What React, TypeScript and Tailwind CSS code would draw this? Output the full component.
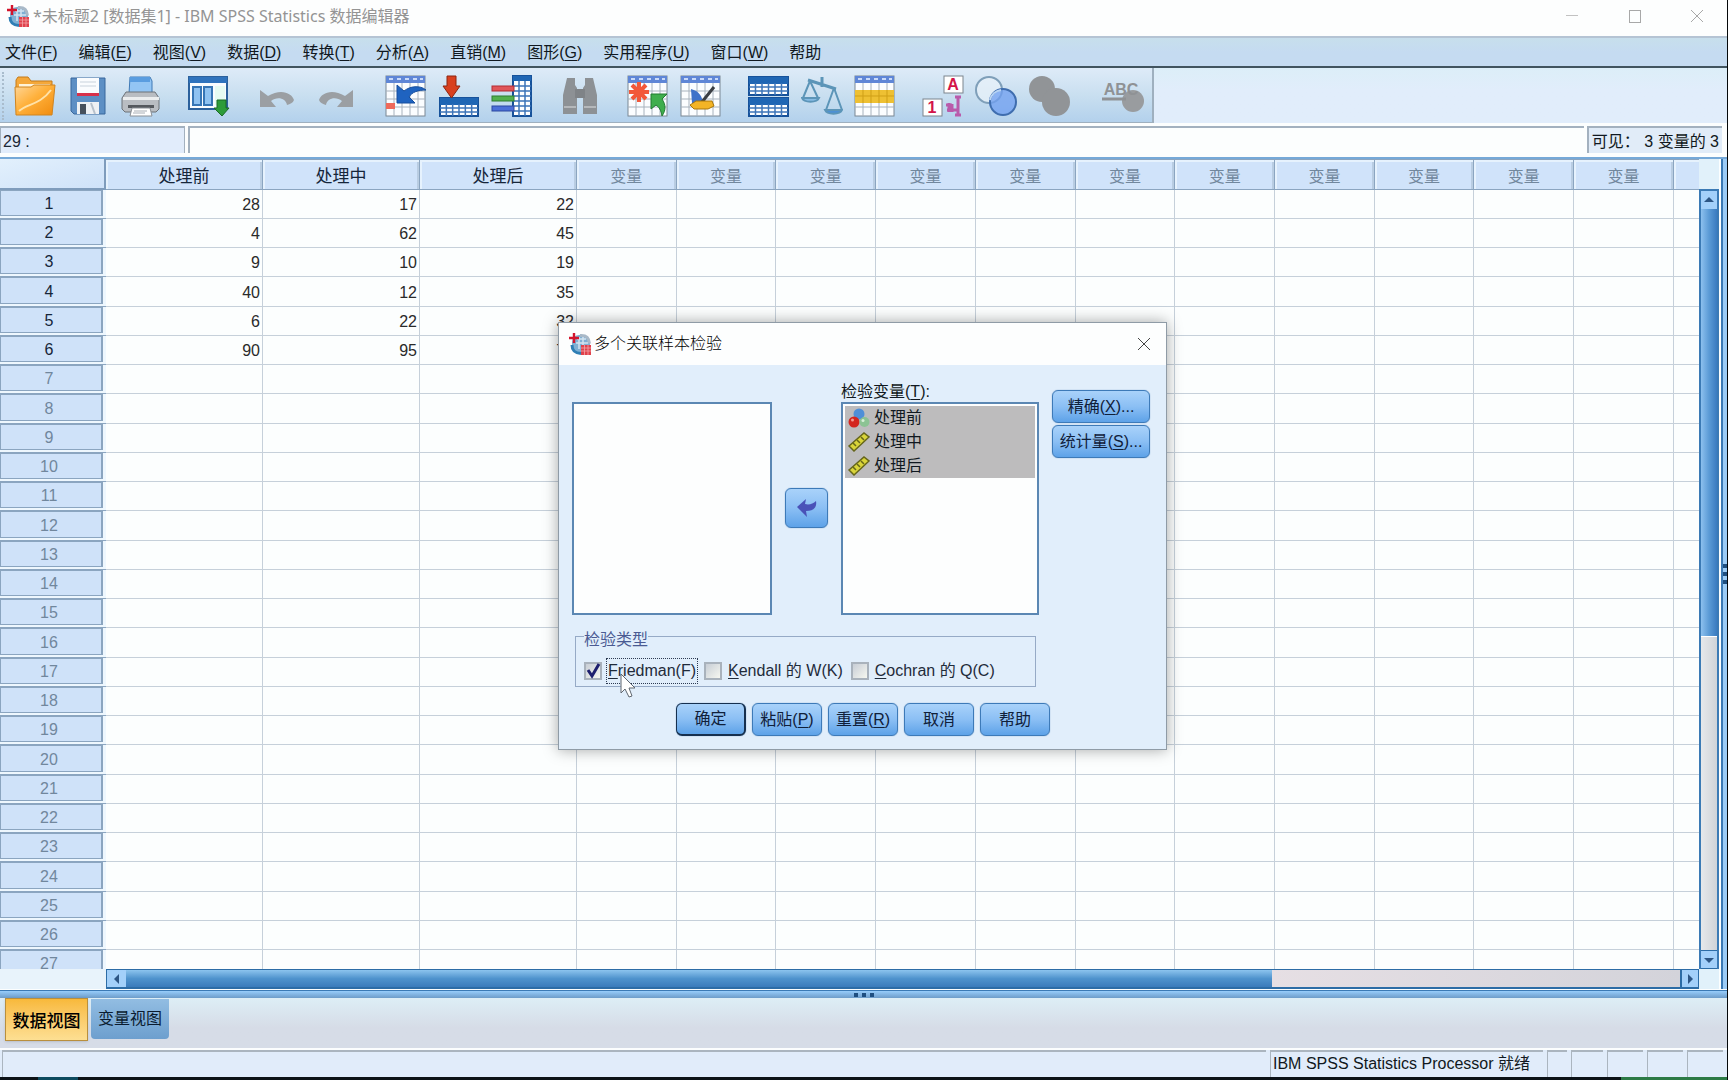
import React, { useState } from 'react';

const MENUS = [
  '文件(&F)',
  '编辑(&E)',
  '视图(&V)',
  '数据(&D)',
  '转换(&T)',
  '分析(&A)',
  '直销(&M)',
  '图形(&G)',
  '实用程序(&U)',
  '窗口(&W)',
  '帮助',
];

const VARIABLES = ['处理前', '处理中', '处理后'];
const EMPTY_COLUMNS = 11;
const ROW_COUNT = 27;

const DATA = [
  [28, 17, 22],
  [4, 62, 45],
  [9, 10, 19],
  [40, 12, 35],
  [6, 22, 32],
  [90, 95, 78],
];

// "&" marks the access key, the letter after it is underlined
function Label({ text }: { text: string }) {
  const at = text.indexOf('&');
  if (at < 0) return <>{text}</>;
  return (
    <>
      {text.slice(0, at)}
      <span className="underline underline-offset-2">{text[at + 1]}</span>
      {text.slice(at + 2)}
    </>
  );
}

function AppLogo() {
  return (
    <svg viewBox="0 0 24 24" className="h-6 w-6 shrink-0">
      <rect x="4" y="3" width="18" height="18" rx="7" fill="#7fb0d4" />
      <path d="M4 13c0 6 3 8 9 8.500" fill="none" stroke="#2f7fb5" strokeWidth="3" />
      <path d="M12 3.500c6-.5 9 2 9.500 8" fill="none" stroke="#a9b9c8" strokeWidth="3" />
      <path d="M9 7h9M8 11h12M11 5v12M15 5v9" stroke="#d3e3f0" strokeWidth="1.500" />
      <rect x="13" y="13" width="10" height="10" fill="#e0424c" />
      <path d="M13 16h10M13 19h10M16.500 13v10M20 13v10" stroke="#f3a4a8" strokeWidth="0.800" />
      <path d="M6 1v10M1 6h10" stroke="#d3142c" strokeWidth="2.400" />
    </svg>
  );
}

function Sheet({ children }: { children?: React.ReactNode }) {
  return (
    <>
      <rect x="1" y="1" width="39" height="40" fill="#fbfdff" stroke="#7b8794" />
      <path d="M1 16h39M1 24h39M1 32h39M9 8v33M17 8v33M25 8v33M33 8v33" stroke="#a7b2bd" />
      <rect x="1" y="1" width="39" height="7" fill="#5f86d6" />
      <path d="M4 4h4M12 4h4M20 4h4M28 4h4M35 4h3" stroke="#c9dafa" strokeWidth="2" />
      {children}
    </>
  );
}

function MiniTable({ x, y, w, h }: { x: number; y: number; w: number; h: number }) {
  const cols = [1, 2, 3, 4, 5].map(i => x + (w * i) / 6);
  const rows = [1, 2].map(i => y + 6 + ((h - 6) * i) / 3);
  return (
    <>
      <rect x={x} y={y} width={w} height={h} fill="#ffffff" stroke="#17529a" strokeWidth="2" />
      <rect x={x} y={y} width={w} height="7" fill="#1f66b4" />
      {cols.map(c => (
        <path key={c} d={`M${c} ${y + 6}V${y + h}`} stroke="#3c74b8" strokeWidth="1.500" />
      ))}
      {rows.map(r => (
        <path key={r} d={`M${x} ${r}H${x + w}`} stroke="#3c74b8" strokeWidth="1.500" />
      ))}
    </>
  );
}

const ICONS: Record<string, React.ReactNode> = {
  打开: (
    <>
      <defs>
        <linearGradient id="folder" x1="0" y1="0" x2="1" y2="1">
          <stop offset="0" stopColor="#ffd79a" />
          <stop offset="0.450" stopColor="#ffb13c" />
          <stop offset="1" stopColor="#f08a0c" />
        </linearGradient>
      </defs>
      <path d="M2 5l2-3h10l3 4h21v12H2z" fill="#f5a83a" stroke="#c47a1a" />
      <path d="M5 9h31v4H5z" fill="#fff3d8" />
      <path d="M1 12h16l3-2h21l-3 30H2z" fill="url(#folder)" stroke="#cf8420" />
      <path d="M5 36C12 29 26 30 37 15" fill="none" stroke="#ffe2a8" strokeWidth="2" />
    </>
  ),
  保存: (
    <>
      <path d="M4 3h34v36H7l-3-3z" fill="#5d8fc4" stroke="#39679c" />
      <rect x="10" y="3" width="22" height="15" fill="#fafcfe" />
      <path d="M13 7h16M13 11h16" stroke="#c8d2dc" />
      <rect x="10" y="18" width="22" height="3" fill="#d8304a" />
      <rect x="10" y="27" width="22" height="12" fill="#eef1f4" />
      <rect x="13" y="29" width="6" height="10" fill="#46505c" />
      <path d="M24 28l4 11" stroke="#b7c1cb" strokeWidth="2" />
    </>
  ),
  打印: (
    <>
      <path d="M10 2h20l2 4v13H9z" fill="#93c5f4" stroke="#3f79b5" />
      <path d="M10 2h20v5H10z" fill="#5a9de0" />
      <path d="M6 17h29l4 6v11l-3 3H5l-3-3V23z" fill="#b9bdc2" stroke="#6d7278" />
      <path d="M3 22h36v3H3z" fill="#eceeef" />
      <path d="M8 30h26v3H8z" fill="#55595e" />
      <path d="M12 33h18l2 8H10z" fill="#ffffff" stroke="#8b9096" />
      <path d="M14 36h13M13 38h12" stroke="#a8aeb5" />
    </>
  ),
  重新调用对话框: (
    <>
      <rect x="1" y="2" width="38" height="32" fill="#f9fcff" stroke="#2c619c" strokeWidth="2" />
      <rect x="1" y="2" width="38" height="6" fill="#2f73bd" />
      <rect x="5" y="12" width="8" height="18" fill="#8fc2f1" stroke="#3675b5" strokeWidth="2" />
      <rect x="16" y="12" width="8" height="18" fill="#8fc2f1" stroke="#3675b5" strokeWidth="2" />
      <path d="M27 11h10v19H27z" fill="#e6fbf2" />
      <path d="M29 25h9v8h3l-7 8-8-8h3z" fill="#2e9c3a" stroke="#1b6b26" />
    </>
  ),
  撤消: (
    <path d="M2 15v17h16l-5-6c6-5 15-3 16 4 3-1 6-2 7-5-2-7-13-12-26-4z" fill="#9b9fa3" />
  ),
  恢复: (
    <path d="M38 15v17H22l5-6c-6-5-15-3-16 4-3-1-6-2-7-5 2-7 13-12 26-4z" fill="#9b9fa3" />
  ),
  转至个案: (
    <Sheet>
      <rect x="1" y="28" width="9" height="6" fill="#ef6a5b" />
      <path d="M12 10v18h18l-6-6c3-5 9-7 17-7-6-5-16-4-22 1z" fill="#1f63c0" stroke="#174f9e" />
    </Sheet>
  ),
  转至变量: (
    <>
      <MiniTable x={2} y={23} w={38} h={18} />
      <path d="M9 1h9v10h4L13.500 23 5 11h4z" fill="#d8401f" stroke="#8c2510" />
    </>
  ),
  变量: (
    <>
      <rect x="22" y="1" width="18" height="40" fill="#ffffff" stroke="#17529a" strokeWidth="2" />
      <rect x="22" y="1" width="18" height="5" fill="#1f66b4" />
      <path d="M22 11h18M22 16h18M22 21h18M22 26h18M22 31h18M22 36h18M28 6v35M34 6v35" stroke="#3c74b8" strokeWidth="1.500" />
      <rect x="1" y="11" width="22" height="5" fill="#e05559" stroke="#b12d34" />
      <rect x="1" y="21" width="22" height="5" fill="#52b04d" stroke="#2e7c30" />
      <rect x="1" y="31" width="22" height="5" fill="#4b6fd8" stroke="#2c489f" />
    </>
  ),
  查找: (
    <>
      <path d="M8 3h8v7l2 3v26H4V20z" fill="#8d9195" />
      <path d="M26 3h8l4 17v19H24V13l2-3z" fill="#8d9195" />
      <rect x="16" y="14" width="10" height="9" fill="#7f8387" />
      <path d="M5 32h12M25 32h12" stroke="#b5b8bb" strokeWidth="2" />
    </>
  ),
  插入个案: (
    <Sheet>
      <path d="M12 7v20M2 17h20M5 10l14 14M19 10L5 24" stroke="#f2583a" strokeWidth="4" />
      <path d="M24 19h16l-5 5c4 6 4 11 0 17-1-6-3-9-6-11l-5 4z" fill="#3fae4d" stroke="#217a30" />
    </Sheet>
  ),
  插入变量: (
    <Sheet>
      <path d="M11 14c8 2 11 7 12 14H12z" fill="#3f72c9" />
      <path d="M22 27L34 12" stroke="#3a3e44" strokeWidth="3" />
      <path d="M10 30l6-4h16l2 5-6 3H14z" fill="#f3b426" stroke="#a9770d" />
    </Sheet>
  ),
  拆分文件: (
    <>
      <MiniTable x={1} y={2} w={39} h={18} />
      <MiniTable x={1} y={23} w={39} h={18} />
    </>
  ),
  加权个案: (
    <g fill="none" stroke="#5c95b8" strokeWidth="2">
      <path d="M7 5l28 9M21 2v10" strokeWidth="3" />
      <path d="M9 6L2 23M9 6l8 17M33 13l-8 22M33 13l8 22" />
      <path d="M1 23h17c-2 5-15 5-17 0z" fill="#86bbe4" />
      <path d="M24 35h17c-2 5-15 5-17 0z" fill="#4d90d4" />
    </g>
  ),
  选择个案: (
    <Sheet>
      <rect x="1" y="15" width="39" height="13" fill="#eec033" />
      <path d="M1 21h39M9 15v13M17 15v13M25 15v13M33 15v13" stroke="#cf9f16" />
    </Sheet>
  ),
  值标签: (
    <>
      <rect x="22" y="1" width="19" height="17" fill="#ffffff" stroke="#7d858d" />
      <text x="31" y="15" textAnchor="middle" fontSize="16" fontWeight="bold" fill="#d3144a" fontFamily="Liberation Sans">
        A
      </text>
      <rect x="1" y="24" width="19" height="17" fill="#ffffff" stroke="#7d858d" />
      <text x="10" y="38" textAnchor="middle" fontSize="16" fontWeight="bold" fill="#d3144a" fontFamily="Liberation Sans">
        1
      </text>
      <path d="M36 21v20M39 22h-6M39 40h-6M27 28v9M25 35h11M30 29v8M24 30h6" stroke="#b95bab" strokeWidth="3" fill="none" />
    </>
  ),
  使用变量集: (
    <>
      <circle cx="14" cy="15" r="13" fill="#e9f2fa" fillOpacity="0.700" stroke="#7f9fb9" strokeWidth="2" />
      <circle cx="28" cy="27" r="13" fill="#6d9df0" fillOpacity="0.750" stroke="#3f6dae" strokeWidth="2" />
      <path d="M15 25a13 13 0 0 1 11-10" fill="none" stroke="#b8d4f4" strokeWidth="2" />
    </>
  ),
  显示所有变量: (
    <>
      <circle cx="14" cy="14" r="13" fill="#919497" />
      <circle cx="28" cy="27" r="14" fill="#919497" />
    </>
  ),
  拼写检查: (
    <>
      <circle cx="31" cy="26" r="11" fill="#999c9f" />
      <text x="19" y="20" textAnchor="middle" fontSize="16" fontWeight="bold" fill="#8f9295" fontFamily="Liberation Sans">
        ABC
      </text>
      <path d="M0 24h24" stroke="#8f9295" strokeWidth="3" />
    </>
  ),
};

const TOOL_GROUPS = [
  ['打开', '保存', '打印'],
  ['重新调用对话框'],
  ['撤消', '恢复'],
  ['转至个案', '转至变量', '变量'],
  ['查找'],
  ['插入个案', '插入变量'],
  ['拆分文件', '加权个案', '选择个案'],
  ['值标签', '使用变量集', '显示所有变量'],
  ['拼写检查'],
];

function TitleBar() {
  return (
    <header className="flex h-9 shrink-0 items-center bg-[#fdfefe] pr-[22px] pb-[5px] pl-[6px] text-[#949494]">
      <AppLogo />
      <h1 className="ml-[3px] flex-1 font-['Noto_Sans','Noto_Sans_CJK_SC',sans-serif] text-base font-normal">
        *未标题2 [数据集1] - IBM SPSS Statistics 数据编辑器
      </h1>
      <div className="flex gap-[46px]">
        <button aria-label="最小化" className="h-4 w-4">
          <svg viewBox="0 0 16 16" stroke="#c2c2c2" fill="none"><path d="M1 7.500h12" /></svg>
        </button>
        <button aria-label="最大化" className="h-4 w-4">
          <svg viewBox="0 0 16 16" stroke="#a8a8a8" fill="none"><rect x="2.500" y="2.500" width="11" height="12" /></svg>
        </button>
        <button aria-label="关闭" className="h-4 w-4">
          <svg viewBox="0 0 16 16" stroke="#a8a8a8" fill="none"><path d="M2 2l12 12M14 2L2 14" /></svg>
        </button>
      </div>
    </header>
  );
}

function Toolbar() {
  return (
    <div className="flex h-[55px] shrink-0 bg-linear-to-b from-[#dceef8] to-[#e1edfb] to-40%">
      <div className="flex items-center gap-[26px] border-r-2 border-b border-[#9fb0bf] bg-linear-to-b from-[#deebf8] via-[#c9dff0] to-[#b3d1ec] pt-[2px] pr-2">
        <span className="-mr-[26px] ml-[2px] h-12 w-[12px] border-l-2 border-dotted border-[#a9bccd]" />
        {TOOL_GROUPS.map(group => (
          <div key={group[0]} className={`flex gap-[11px] ${group[0] === '拼写检查' ? 'ml-[6px]' : ''}`}>
            {group.map(name => (
              <button key={name} title={name} aria-label={name} className={group[0] === '撤消' ? 'w-[46px]' : 'w-[42px]'}>
                <svg viewBox="0 0 42 42" className="h-[42px] w-full">{ICONS[name]}</svg>
              </button>
            ))}
          </div>
        ))}
      </div>
    </div>
  );
}

function CellBar() {
  return (
    <div className="flex shrink-0 bg-[#fcfefe] pt-[3px] pr-[5px] pb-1">
      <output className="h-[27px] w-[185px] border-t-2 border-r border-l border-[#a3b1bf] bg-[#e1ecfb] pl-[2px] leading-7 text-[#1c2836]">
        29 :
      </output>
      <input
        aria-label="单元格编辑器"
        className="ml-[3px] h-[27px] min-w-0 flex-1 border-t-2 border-l-2 border-[#a3b1bf] bg-[#fcfefe] px-1 outline-none"
      />
      <output className="ml-[3px] h-[27px] border-t-2 border-l-2 border-[#a3b1bf] bg-[#e1ecf8] pr-[3px] pl-[3px] leading-7 whitespace-nowrap">
        可见： 3 变量的 3
      </output>
    </div>
  );
}

function DataGrid() {
  return (
    <table className="w-full table-fixed border-separate border-spacing-0">
      <colgroup>
        <col className="w-[106px]" />
        {VARIABLES.map(v => (
          <col key={v} className="w-[157px]" />
        ))}
        {Array.from({ length: EMPTY_COLUMNS }, (_, i) => (
          <col key={i} />
        ))}
        <col className="w-[25px]" />
      </colgroup>
      <thead>
        <tr className="h-[31px]">
          <td className="border-r-2 border-b-2 border-[#7f9cbc] bg-linear-to-br from-[#e2f0fc] to-[#cfe2f9]" />
          {VARIABLES.map(v => (
            <th
              key={v}
              scope="col"
              className="border-t border-r border-b border-[#8ba5c0] bg-[#d0e3fa] p-0 pt-1 text-[17px] leading-6 font-normal text-[#16263a] shadow-[inset_2px_2px_0_#e6f2fd,inset_-2px_0_0_#b9cde2]"
            >
              {v}
            </th>
          ))}
          {Array.from({ length: EMPTY_COLUMNS }, (_, i) => (
            <th
              key={i}
              scope="col"
              className="border-t border-r border-b border-[#8ba5c0] bg-[#d0e3fa] p-0 pt-1 leading-6 font-normal text-[#71879d] shadow-[inset_2px_2px_0_#e6f2fd,inset_-2px_0_0_#b9cde2]"
            >
              变量
            </th>
          ))}
          <td className="border-t border-b border-[#8ba5c0] bg-[#d0e3fa] shadow-[inset_2px_2px_0_#e6f2fd]" />
        </tr>
      </thead>
      <tbody>
        {Array.from({ length: ROW_COUNT }, (_, row) => (
          <tr key={row} className="h-[29px] nth-[4n]:h-[30px]">
            <th scope="row" className="h-px border-b border-[#8ba5c0] bg-[#eef7fe] p-0 pr-[3px] pb-[2px] leading-5 font-normal">
              <div
                className={`flex h-full min-h-[26px] items-center justify-center border border-r-2 border-[#8ba5c0] bg-[#cfe2f9] pt-[2px] pr-1 ${
                  row < DATA.length ? 'text-[#16263a]' : 'text-[#71879d]'
                }`}
              >
                {row + 1}
              </div>
            </th>
            {VARIABLES.map((v, col) => (
              <td key={v} className="border-r border-b border-[#c6d0da] bg-[#fcfefe] p-0 pt-[2px] pr-[2px] text-right leading-5 text-[#2a2a2a]">
                {DATA[row]?.[col]}
              </td>
            ))}
            {Array.from({ length: EMPTY_COLUMNS }, (_, i) => (
              <td key={i} className="border-r border-b border-[#c6d0da] bg-[#fcfefe] p-0" />
            ))}
            <td className="border-b border-[#c6d0da] bg-[#fcfefe] p-0" />
          </tr>
        ))}
      </tbody>
    </table>
  );
}

function Arrow({ d }: { d: string }) {
  return (
    <svg viewBox="0 0 12 12" className="h-3 w-3" fill="#2d5685">
      <path d={d} />
    </svg>
  );
}

function HorizontalScroll() {
  return (
    <div className="flex shrink-0 bg-[#e8f3fb] pl-[106px]">
      <div className="flex h-5 flex-1 border border-b-2 border-[#2c6ca6] bg-[#d8d3da]">
        <button aria-label="向左滚动" className="flex w-[19px] items-center justify-center bg-[#a3d0fa]">
          <Arrow d="M8 1v10L3 6z" />
        </button>
        <div className="w-[72%] bg-linear-to-b from-[#8cc4ee] via-[#4f93cd] to-[#3a7bbb]" />
        <div className="flex-1 bg-linear-to-r from-[#e6dfe4] to-[#d3d3da]" />
        <button aria-label="向右滚动" className="flex w-[18px] items-center justify-center border-l-2 border-[#2c6ca6] bg-[#a3d0fa]">
          <Arrow d="M4 1v10l5-5z" />
        </button>
      </div>
    </div>
  );
}

function VerticalScroll() {
  return (
    <div className="flex w-5 flex-1 flex-col border-x-2 border-t-2 border-[#3b7ab5] bg-[#d9dde2]">
      <button aria-label="向上滚动" className="flex h-[18px] items-center justify-center bg-[#a3d0fa]">
        <Arrow d="M1 8h10L6 3z" />
      </button>
      <div className="h-[55%] border-b border-white bg-linear-to-r from-[#8cc0ee] via-[#5b9bd6] to-[#3a7bc0]" />
      <div className="flex-1 bg-linear-to-r from-[#e6e8eb] to-[#cfd3d8]" />
      <button aria-label="向下滚动" className="flex h-[19px] items-center justify-center border-y border-[#2c6ca6] bg-[#a3d0fa]">
        <Arrow d="M1 4h10L6 9z" />
      </button>
    </div>
  );
}

function NominalIcon() {
  return (
    <svg viewBox="0 0 22 20" className="h-5 w-[22px]">
      <circle cx="11" cy="6" r="5.500" fill="#4f8fd8" />
      <circle cx="6" cy="14" r="5.500" fill="#d3261f" />
      <circle cx="4.500" cy="12" r="1.500" fill="#f39a92" />
      <circle cx="16.500" cy="14" r="5" fill="#8cc394" />
      <circle cx="15" cy="12.500" r="1.500" fill="#d6f0d8" />
    </svg>
  );
}

function ScaleIcon() {
  return (
    <svg viewBox="0 0 22 20" className="h-5 w-[22px]">
      <path d="M1 14L16 1l5 4L6 19z" fill="#d9d43a" stroke="#66661a" strokeWidth="1.500" />
      <path d="M5 11l3 3M9 8l3 3M13 5l3 3" stroke="#66661a" strokeWidth="1.500" />
    </svg>
  );
}

const DIALOG_BUTTON =
  'rounded-md border border-[#3d7ab8] bg-linear-to-b from-[#a9d2fa] via-[#8bbff4] to-[#5da2e8] text-[#10203a] shadow-[0_0_1px_#3d7ab8]';

const TESTS = [
  { id: 'friedman', label: '&Friedman(F)' },
  { id: 'kendall', label: '&Kendall 的 W(K)' },
  { id: 'cochran', label: '&Cochran 的 Q(C)' },
];

function RelatedSamplesDialog() {
  const [checked, setChecked] = useState<Record<string, boolean>>({ friedman: true });

  const toggle = (id: string) => {
    setChecked(prev => ({ ...prev, [id]: !prev[id] }));
  };

  return (
    <section
      role="dialog"
      aria-labelledby="dialog-title"
      className="absolute top-[322px] left-[558px] w-[609px] border border-[#8f9ba6] bg-[#e1eefb] pb-[13px] shadow-[0_0_14px_rgba(0,0,0,0.35)]"
    >
      <div className="flex h-[42px] items-center bg-[#fdfefe] pr-[14px] pl-[9px]">
        <AppLogo />
        <h2 id="dialog-title" className="ml-[2px] flex-1 font-light text-black">多个关联样本检验</h2>
        <button aria-label="关闭" className="h-4 w-4">
          <svg viewBox="0 0 16 16" stroke="#444" fill="none"><path d="M2 2l12 12M14 2L2 14" /></svg>
        </button>
      </div>

      <div className="flex pt-[13px] pl-[13px]">
        <div className="mt-6 h-[213px] w-[200px] border-2 border-[#5b87b3] bg-[#fdfefe]" />
        <button aria-label="移动变量" className={`mx-[13px] mt-[110px] flex h-10 w-[43px] items-center justify-center ${DIALOG_BUTTON}`}>
          <svg viewBox="0 0 20 20" className="h-5 w-5" fill="#4a52b8"><path d="M0 9l9-8-1 5c4 1 8 0 11-3 1 5-1 10-10 10l1 6z" /></svg>
        </button>
        <div>
          <div id="test-vars" className="h-6 pt-[2px] leading-6"><Label text="检验变量(&T):" /></div>
          <ul role="listbox" aria-labelledby="test-vars" className="h-[213px] w-[198px] border-2 border-[#5b87b3] bg-[#fdfefe] p-[2px]">
            {VARIABLES.map((v, i) => (
              <li key={v} role="option" aria-selected="true" className="flex h-6 items-center gap-1 bg-[#bdbcbd] pl-[3px]">
                {i === 0 ? <NominalIcon /> : <ScaleIcon />}
                {v}
              </li>
            ))}
          </ul>
        </div>
        <div className="mt-3 ml-[13px] flex w-[98px] flex-col gap-[2px]">
          <button className={`h-[33px] ${DIALOG_BUTTON}`}><Label text="精确(&X)..." /></button>
          <button className={`h-[33px] ${DIALOG_BUTTON}`}><Label text="统计量(&S)..." /></button>
        </div>
      </div>

      <fieldset className="mt-[5px] ml-4 flex h-[67px] w-[461px] items-center gap-[6px] border border-[#96aac6] px-2 pt-1">
        <legend className="pt-2 leading-6 text-[#4a5a92]">检验类型</legend>
        {TESTS.map(test => (
          <label key={test.id} className="flex items-center gap-1 whitespace-nowrap text-[#1f2b3a]">
            <span className="relative flex">
              <input
                type="checkbox"
                checked={!!checked[test.id]}
                onChange={() => toggle(test.id)}
                className="h-[18px] w-[18px] appearance-none border-2 border-[#a9b2bc] bg-linear-to-br from-[#c8ced6] to-[#f6f7f0]"
              />
              {checked[test.id] && (
                <svg viewBox="0 0 18 18" className="pointer-events-none absolute inset-0" fill="none" stroke="#1d1f6e" strokeWidth="3">
                  <path d="M4 8l4 6 7-12" />
                </svg>
              )}
            </span>
            <span className={test.id === 'friedman' ? 'border border-dotted border-[#2c3a52] px-[1px]' : 'border border-transparent px-[1px]'}>
              <Label text={test.label} />
            </span>
          </label>
        ))}
      </fieldset>

      <div className="mt-4 flex gap-[6px] pl-[117px]">
        {['确定', '粘贴(&P)', '重置(&R)', '取消', '帮助'].map((text, i) => (
          <button key={text} className={`h-[33px] w-[70px] ${DIALOG_BUTTON} ${i === 0 ? 'border-r-2 border-b-2 border-[#16304f]' : ''}`}>
            <Label text={text} />
          </button>
        ))}
      </div>
    </section>
  );
}

export default function App() {
  return (
    <div className="relative flex h-screen flex-col overflow-hidden border-r border-[#05080a] bg-[#fcfefe] font-['Liberation_Sans','Noto_Sans_CJK_SC',sans-serif] text-base text-[#101820]">
      <TitleBar />

      <nav className="flex h-8 shrink-0 items-center gap-[21px] border-t-2 border-b-2 border-t-[#b5c4d4] border-b-[#41545f] bg-linear-to-b from-[#c7dfec] to-[#c5dbf1] to-50% pt-[2px] pl-[5px]">
        {MENUS.map(menu => (
          <button key={menu} className="whitespace-nowrap">
            <Label text={menu} />
          </button>
        ))}
      </nav>

      <Toolbar />
      <CellBar />

      <main className="flex min-h-0 flex-1 border-t-2 border-[#76a9d8]">
        <div className="flex min-w-0 flex-1 flex-col">
          <div className="min-h-0 flex-1 overflow-hidden">
            <DataGrid />
          </div>
          <HorizontalScroll />
        </div>
        <div className="flex flex-col bg-[#e1f1fa] pb-5">
          <div className="h-[30px]" />
          <VerticalScroll />
        </div>
        <div className="ml-[2px] flex w-[6px] flex-col items-center justify-center gap-1 border-l-2 border-[#3b7ab5] bg-[#9cccf6]">
          <span className="h-1 w-1 bg-[#1f4f80]" />
          <span className="h-1 w-1 bg-[#1f4f80]" />
          <span className="h-1 w-1 bg-[#1f4f80]" />
        </div>
      </main>

      <div className="mt-[1px] flex h-2 shrink-0 items-center justify-center gap-1 border-t border-[#3b7ab5] bg-linear-to-b from-[#97cdfb] to-[#6d9cc9]">
        <span className="h-1 w-1 bg-[#1f4f80]" />
        <span className="h-1 w-1 bg-[#1f4f80]" />
        <span className="h-1 w-1 bg-[#1f4f80]" />
      </div>

      <div className="flex h-[50px] shrink-0 items-start gap-[3px] bg-linear-to-b from-[#ddeef6] to-[#d6dce7] to-60% pl-[5px]">
        <button className="h-[43px] w-[83px] border border-[#b98f3d] bg-linear-to-b from-[#f8b93a] to-[#fddf92] pt-1 text-[17px] font-medium text-black shadow">
          数据视图
        </button>
        <button className="mt-[1px] h-10 w-[78px] rounded-b bg-linear-to-b from-[#92bde2] to-[#6d9fce] text-[#0b1c30]">
          变量视图
        </button>
      </div>

      <footer className="flex h-[29px] shrink-0 gap-1 border-t-2 border-[#fbfdfe] bg-[#e1ecfa] pr-1 pl-[2px]">
        <div className="flex-1 border-t-2 border-l border-[#abb5bf]" />
        <div className="w-[273px] border-t-2 border-l border-[#abb5bf] pl-[2px] leading-6 whitespace-nowrap">
          IBM SPSS Statistics Processor 就绪
        </div>
        <div className="w-5 border-t-2 border-l border-[#abb5bf]" />
        <div className="w-8 border-t-2 border-l border-[#abb5bf]" />
        <div className="w-9 border-t-2 border-l border-[#abb5bf]" />
        <div className="w-9 border-t-2 border-l border-[#abb5bf]" />
        <div className="w-9 border-t-2 border-l border-[#abb5bf]" />
      </footer>

      <div className="flex h-[3px] shrink-0 bg-[#0c1216] pl-[38px]">
        <div className="w-10 bg-[#0d4a5e]" />
        <div className="ml-auto w-[106px] bg-[#2c7a45]" />
      </div>

      <RelatedSamplesDialog />

      <svg viewBox="0 0 16 25" className="pointer-events-none absolute top-[673px] left-[620px] h-[25px] w-4">
        <path d="M1 1v19l4-4 4 8 3-1-3-8h6z" fill="#ffffff" stroke="#5f6770" />
      </svg>
    </div>
  );
}
